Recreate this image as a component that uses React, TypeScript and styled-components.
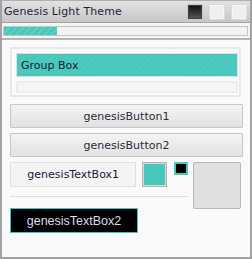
import React from "react";
import styled, { createGlobalStyle } from "styled-components";

const GlobalStyle = createGlobalStyle`
  html, body {
    margin: 0;
    padding: 0;
    background: #ffffff;
  }
`;

const App: React.FC = () => {
    return (
        <>
            <GlobalStyle />
            <Window>
                <TitleBar>
                    <Title>Genesis Light Theme</Title>
                    <TitleButtons>
                        <TitleButton dark />
                        <TitleButton />
                        <TitleButton />
                    </TitleButtons>
                </TitleBar>
                <ProgressArea>
                    <ProgressTrack>
                        <ProgressFill style={{ width: "22%" }} />
                    </ProgressTrack>
                </ProgressArea>
                <Content>
                    <GroupBox>
                        <GroupHeader>Group Box</GroupHeader>
                        <GroupBody />
                    </GroupBox>
                    <Button>genesisButton1</Button>
                    <Button>genesisButton2</Button>
                    <BottomArea>
                        <LeftColumn>
                            <Row>
                                <TextBox>genesisTextBox1</TextBox>
                                <ColorSwatch />
                                <CheckBox />
                            </Row>
                            <Separator />
                            <DarkTextBox>genesisTextBox2</DarkTextBox>
                        </LeftColumn>
                        <Panel />
                    </BottomArea>
                </Content>
            </Window>
        </>
    );
};

const Window = styled.div`
  width: 252px;
  height: 259px;
  box-sizing: border-box;
  border: 2px solid #a2a2a2;
  border-top: 1px solid #b0b0b0;
  background: #fafafa;
  display: flex;
  flex-direction: column;
  font-family: "DejaVu Sans", Verdana, sans-serif;
`;

const TitleBar = styled.div`
  height: 21px;
  display: flex;
  align-items: center;
  justify-content: space-between;
  padding: 0 3px 0 2px;
  background: linear-gradient(#e2e2e2, #c6c6c6);
  border-bottom: 1px solid #a4a4a4;
`;

const Title = styled.span`
  font-size: 11px;
  color: #2c1c3c;
  letter-spacing: 0.1px;
`;

const TitleButtons = styled.div`
  display: flex;
  gap: 6px;
`;

const TitleButton = styled.div<{ dark?: boolean }>`
  width: 16px;
  height: 16px;
  box-sizing: border-box;
  border: 1px solid ${(p) => (p.dark ? "#c8c8c8" : "#dadada")};
  box-shadow: inset 0 0 0 1px ${(p) => (p.dark ? "#404040" : "#f6f6f6")};
  background: ${(p) =>
    p.dark ? "linear-gradient(#0c0c0c, #5a5a5a)" : "#efefef"};
`;

const ProgressArea = styled.div`
  padding: 3px 2px 2px 1px;
  background: #f4f4f4;
  border-bottom: 2px solid #b4b4b4;
`;

const ProgressTrack = styled.div`
  height: 10px;
  box-sizing: border-box;
  border: 1px solid #c4c4c4;
  background: #f2f2f2;
`;

const ProgressFill = styled.div`
  height: 100%;
  background: repeating-linear-gradient(
    -45deg,
    #48c8bc 0px,
    #48c8bc 3px,
    #58d0c4 3px,
    #58d0c4 5px
  );
`;

const Content = styled.div`
  flex: 1;
  display: flex;
  flex-direction: column;
  padding: 7px 6px 0 8px;
  background: #fafafa;
`;

const GroupBox = styled.div`
  width: 231px;
  box-sizing: border-box;
  border: 2px solid #e8e8e8;
  padding: 4px 1px 2px 4px;
  display: flex;
  flex-direction: column;
  gap: 4px;
  margin-bottom: 7px;
`;

const GroupHeader = styled.div`
  height: 24px;
  box-sizing: border-box;
  border: 1px solid #e0e0e0;
  display: flex;
  align-items: center;
  padding-left: 4px;
  font-size: 11px;
  color: #1c1c30;
  background: repeating-linear-gradient(
    -45deg,
    #48c8bc 0px,
    #48c8bc 3px,
    #4ccabe 3px,
    #4ccabe 5px
  );
`;

const GroupBody = styled.div`
  height: 12px;
  box-sizing: border-box;
  border: 2px solid #ececec;
  background: #f6f6f6;
`;

const Button = styled.div`
  width: 233px;
  height: 24px;
  box-sizing: border-box;
  border: 1px solid #c6c6c6;
  border-radius: 1px;
  background: linear-gradient(#f4f4f4, #e2e2e2);
  display: flex;
  align-items: center;
  justify-content: center;
  font-size: 11px;
  color: #2a2a3a;
  margin-bottom: 5px;
`;

const BottomArea = styled.div`
  display: flex;
  gap: 5px;
`;

const LeftColumn = styled.div`
  display: flex;
  flex-direction: column;
  width: 178px;
`;

const Row = styled.div`
  display: flex;
  align-items: flex-start;
  gap: 6px;
`;

const TextBox = styled.div`
  width: 128px;
  height: 25px;
  box-sizing: border-box;
  border: 1px solid #e0e0e0;
  background: #f4f4f4;
  display: flex;
  align-items: center;
  justify-content: center;
  font-size: 11px;
  color: #18183a;
`;

const ColorSwatch = styled.div`
  width: 25px;
  height: 25px;
  box-sizing: border-box;
  border: 1px solid #b4b4b4;
  box-shadow: inset 0 0 0 1px #d8d8d8;
  background: #48c8bc;
`;

const CheckBox = styled.div`
  width: 14px;
  height: 13px;
  box-sizing: border-box;
  border: 2px solid #48c8bc;
  border-radius: 1px;
  background: #000000;
  margin-left: 1px;
`;

const Separator = styled.div`
  height: 1px;
  background: #e0e0e0;
  margin: 9px 0 11px;
`;

const DarkTextBox = styled.div`
  width: 128px;
  height: 25px;
  box-sizing: border-box;
  border: 1px solid #3cc8bc;
  background: #000000;
  display: flex;
  align-items: center;
  justify-content: center;
  font-family: "Liberation Sans", Arial, sans-serif;
  font-size: 12.5px;
  color: #dcdcec;
`;

const Panel = styled.div`
  width: 48px;
  height: 47px;
  box-sizing: border-box;
  border: 1px solid #b8b8b8;
  border-radius: 2px;
  background: #e0e0e0;
`;

export default App;
